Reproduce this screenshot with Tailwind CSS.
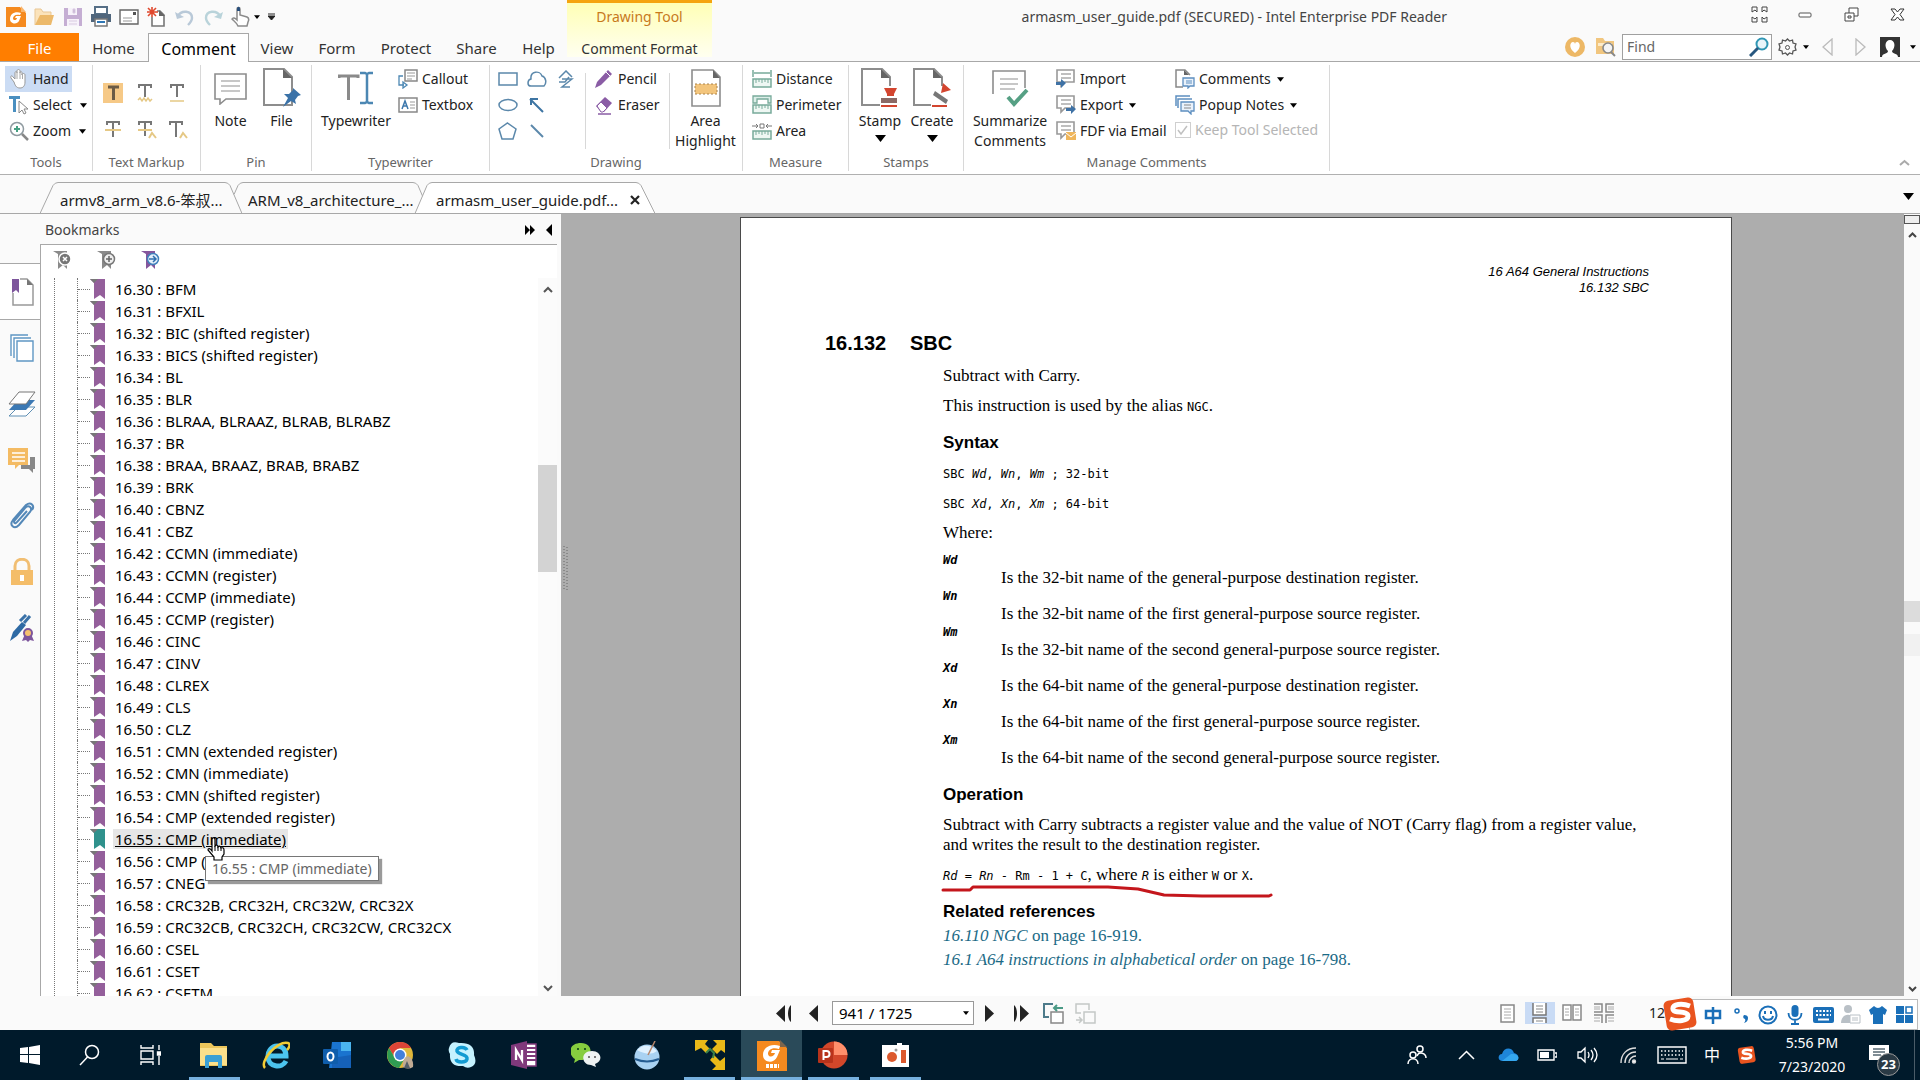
<!DOCTYPE html>
<html lang="en">
<head>
    <meta charset="UTF-8">
    <meta name="viewport" content="width=device-width, initial-scale=1.0">
    <title>armasm_user_guide.pdf (SECURED) - Intel Enterprise PDF Reader</title>
    <script src="https://cdn.jsdelivr.net/npm/@tailwindcss/browser@4"></script>
</head>
<body class="h-screen flex flex-col overflow-hidden bg-[#fafafa] font-['Noto_Sans','Noto_Sans_CJK_SC',sans-serif] text-[14px] leading-5 text-[#222]">
    <svg class="hidden">
        <symbol id="caret" viewBox="0 0 8 5"><path d="M0 0h8L4 5z" fill="currentColor"/></symbol>
        <symbol id="pdf-page" viewBox="0 0 38 40"><path d="M1 1h20l8 8v28H1z" fill="#fff" stroke="#8d8d8d" stroke-width="2"/><path d="M20 1v9h9z" fill="#666"/></symbol>
        <symbol id="bubble" viewBox="0 0 20 20"><path d="M1 1h17v12h-9l-4 4v-4H1z" fill="#fff" stroke="#999" stroke-width="1.6"/><path d="M5 5h10M5 9h10" stroke="#aaa" stroke-width="1.5"/></symbol>
        <symbol id="ruler" viewBox="0 0 20 20"><path d="M1 10h18v8H1z" fill="#eef7f3" stroke="#78ab9b" stroke-width="1.5"/><path d="M4 10v4M7 10v3M10 10v4M13 10v3M16 10v4" stroke="#78ab9b"/></symbol>
    </svg>

    <!-- title bar and menu -->
    <header class="flex h-[62px] border-b border-[#a8a8a8] shrink-0">
        <div class="flex">
            <div class="flex flex-col">
                <div class="flex items-center h-[33px] pl-[6px] gap-2">
                    <button aria-label="Reader"><svg width="20" height="22" viewBox="0 0 20 22"><path d="M0 1h14l6 6v14H0z" fill="#f58a1f"/><path d="M15 0v6h5z" fill="#f9b56c"/><path d="M15 7C9 5 4 8 4 13c0 5 7 6 9 2l2-5h-5l-1 2h2c0 2-3 3-4 1 0-3 2-5 7-4z" fill="#fff"/></svg></button>
                    <button aria-label="Open"><svg width="21" height="20" viewBox="0 0 21 20"><path d="M1 18V2h6l2 3h8v4" fill="#fbe3bb" stroke="#e9c795"/><path d="M1 18L6 8h14l-3 10z" fill="#ecb96a"/></svg></button>
                    <button aria-label="Save"><svg width="20" height="20" viewBox="0 0 20 20"><path d="M1 1h18v18H1z" fill="#c5aed3"/><path d="M5 1h9v7H5zM4 12h12v7H4z" fill="#f7f2fa"/><path d="M10 2h2v4h-2zM6 14h8M6 17h8" fill="#c5aed3" stroke="#d8cbe0"/></svg></button>
                    <button aria-label="Print"><svg width="20" height="21" viewBox="0 0 20 21"><path d="M4 1h12v7H4z" fill="#fff" stroke="#566f86" stroke-width="2"/><path d="M0 8h20v8H0z" fill="#50667c"/><path d="M4 13h12v7H4z" fill="#fff" stroke="#777" stroke-width="1.5"/><path d="M6 16h8" stroke="#2f77b5" stroke-width="2"/></svg></button>
                    <button aria-label="Email"><svg width="20" height="18" viewBox="0 0 20 18"><path d="M1 2h18v14H1z" fill="#fff" stroke="#666" stroke-width="1.4"/><path d="M4 10h9M4 13h9" stroke="#999"/><path d="M14 4h3v3h-3z" fill="#555"/></svg></button>
                    <button aria-label="New"><svg width="20" height="22" viewBox="0 0 20 22"><path d="M5 11v9h12V9l-4-4h-3" fill="#fff" stroke="#777" stroke-width="1.6"/><path d="M12 4v6h6z" fill="#666"/><path d="M5 1v10M0 6h11M1 2l8 8M9 2l-8 8" stroke="#e0492e" stroke-width="1.6"/></svg></button>
                    <button aria-label="Undo"><svg width="20" height="20" viewBox="0 0 20 20"><path d="M3 9c3-6 14-6 14 2 0 3-2 5-4 7" fill="none" stroke="#b9c9d8" stroke-width="2.4"/><path d="M0 5l2 7 7-2z" fill="#b9c9d8"/></svg></button>
                    <button aria-label="Redo"><svg width="20" height="20" viewBox="0 0 20 20"><path d="M17 9C14 3 3 3 3 11c0 3 2 5 4 7" fill="none" stroke="#b9d3da" stroke-width="2.4"/><path d="M20 5l-2 7-7-2z" fill="#b9d3da"/></svg></button>
                    <button aria-label="Touch mode" class="flex items-center gap-1"><svg width="19" height="21" viewBox="0 0 19 21"><path d="M6 12V3c0-2 3-2 3 0v6l7 2c2 1 2 3 1 5l-1 4H7c-1-3-4-5-6-7 1-2 3-1 5 1z" fill="#fff" stroke="#8b8b8b" stroke-width="1.5"/><path d="M6 5V3c0-3 3-3 3 0v2z" fill="#274e7c"/></svg><svg width="6" height="4" class="text-black"><use href="#caret"/></svg></button>
                    <button aria-label="Customize toolbar"><svg width="7" height="8" viewBox="0 0 7 8"><path d="M0 1h7M0 3h7l-3.500 4z" stroke="#222" fill="#222"/></svg></button>
                </div>
                <nav class="flex h-[28px] text-[15px] text-[#333] [&>button]:pt-[2px]">
                    <button class="w-[79px] bg-[#ff7e00] text-white">File</button>
                    <button class="w-[69px]">Home</button>
                    <button class="w-[101px] h-[29px] bg-white border border-b-0 border-[#a8a8a8] text-[16px] text-black">Comment</button>
                    <button class="w-[56px]">View</button>
                    <button class="w-[64px]">Form</button>
                    <button class="w-[74px]">Protect</button>
                    <button class="w-[67px]">Share</button>
                    <button class="w-[57px]">Help</button>
                </nav>
            </div>
            <div class="w-[145px] h-[57px] border-t-3 border-[#f5a40f] bg-linear-to-b from-[#ffffb5] to-[#fffff0] flex flex-col items-center text-[#c8791c]">
                <span class="h-[29px] leading-7 shrink-0">Drawing Tool</span>
                <button class="h-[32px] shrink-0 pt-px text-[#333]">Comment Format</button>
            </div>
        </div>
        <div class="text-[#444] pt-[7px] ml-auto mr-[112px] whitespace-nowrap">armasm_user_guide.pdf (SECURED) - Intel Enterprise PDF Reader</div>
        <div class="flex flex-col items-end">
            <div class="flex h-[33px] pb-1">
                <button aria-label="Full screen" class="w-[46px] grid place-items-center"><svg width="17" height="17" viewBox="0 0 17 17" fill="none" stroke="#444"><path d="M1 1h5v5l-2-2-3 2zM11 1h5v5l-3-2-2 2zM1 11l3 2 2-2v5H1zM11 11l2 2 3-2v5h-5z"/></svg></button>
                <button aria-label="Minimize" class="w-[46px] grid place-items-center"><svg width="14" height="6" viewBox="0 0 14 6"><rect x="1" y="1" width="12" height="4" rx="1" fill="#fff" stroke="#555"/></svg></button>
                <button aria-label="Restore" class="w-[46px] grid place-items-center"><svg width="15" height="15" viewBox="0 0 15 15" fill="#fff" stroke="#444"><path d="M5 1h9v8H5z"/><path d="M1 6h9v8H1z"/><path d="M4 9h3v2H4z"/></svg></button>
                <button aria-label="Close" class="w-[46px] grid place-items-center"><svg width="15" height="13" viewBox="0 0 15 13"><path d="M1 1h4l2.500 3L10 1h4l-4 5.500L14 12h-4L7.500 9 5 12H1l4-5.500z" fill="#fff" stroke="#333"/></svg></button>
            </div>
            <div class="flex items-center h-[28px] pr-1">
                <button aria-label="Favorites" class="w-[31px] grid place-items-center"><svg width="20" height="20" viewBox="0 0 20 20"><circle cx="10" cy="10" r="10" fill="#edb866"/><path d="M10 16C3 11 5 5 8 5q2 0 2 2 0-2 2-2c3 0 5 6-2 11z" fill="#fff"/></svg></button>
                <button aria-label="Search folder" class="w-[32px] grid place-items-center"><svg width="20" height="20" viewBox="0 0 20 20"><path d="M0 1h7l2 3h9v13H0z" fill="#f1c67f"/><path d="M2 6h14v3H2z" fill="#fdebc8"/><circle cx="12" cy="11" r="5" fill="#f4f4f4" stroke="#888" stroke-width="1.600"/><path d="M15 15l4 4" stroke="#888" stroke-width="2"/></svg></button>
                <label class="flex items-center w-[150px] h-[26px] border border-[#a0a0a0] bg-white pl-1 pr-[2px]">
                    <input type="text" aria-label="Find" placeholder="Find" class="w-full outline-none placeholder:text-[#666]">
                    <svg class="shrink-0" width="20" height="20" viewBox="0 0 20 20"><circle cx="13" cy="7" r="5.500" fill="#e8f5fa" stroke="#2f96b4" stroke-width="2"/><path d="M9 11l-8 8" stroke="#27577f" stroke-width="3"/></svg>
                </label>
                <button aria-label="Settings" class="flex items-center w-[42px] pl-[6px] gap-[6px]"><svg width="19" height="19" viewBox="0 0 19 19" fill="none" stroke="#555"><path d="M9.500 1l2 2 3-1 .5 3 3 1-1 3 1 3-3 1-.5 3-3-1-2 2-2-2-3 1-.5-3-3-1 1-3-1-3 3-1L4.500 2l3 1z" stroke-width="1.300"/><circle cx="9.500" cy="9.500" r="2"/></svg><svg width="6" height="4" class="text-black shrink-0"><use href="#caret"/></svg></button>
                <button aria-label="Previous result" class="w-[26px] grid place-items-center"><svg width="11" height="18" viewBox="0 0 11 18"><path d="M10 1v16L1 9z" fill="none" stroke="#bbb" stroke-width="1.300"/></svg></button>
                <button aria-label="Next result" class="w-[40px] grid place-items-center"><svg width="11" height="18" viewBox="0 0 11 18"><path d="M1 1v16l9-8z" fill="none" stroke="#bbb" stroke-width="1.300"/></svg></button>
                <button aria-label="Account" class="flex items-center gap-[10px]"><svg width="20" height="20" viewBox="0 0 20 20"><path d="M0 0h20v20H0z" fill="#333"/><path d="M2 20c0-4 6-3 6-6-4-4-3-11 2-11s6 7 2 11c0 3 6 2 6 6z" fill="#fff"/></svg><svg width="6" height="4" class="text-black"><use href="#caret"/></svg></button>
            </div>
        </div>
    </header>

    <!-- ribbon -->
    <section class="relative flex h-[113px] shrink-0 bg-white border-b border-[#b0b0b0] py-[3px]">
        <div class="w-[93px] border-r border-[#d8d8d8] flex flex-col">
            <div class="h-[90px] pt-px pl-[5px]">
                <button class="flex items-center gap-1 h-[26px] w-[67px] bg-[#cbdcf4] pl-1"><svg width="20" height="20" viewBox="0 0 20 20"><path d="M5 13L2 9c-1-2 1-3 2-1l2 2V4c0-2 2-2 2 0V2c0-2 3-2 3 0v2c0-2 2-2 2 0v2c0-2 3-2 3 0v7c0 4-2 6-5 6-4 0-5-3-6-6z" fill="#fff" stroke="#999"/><path d="M8 4v6M11 4v6M13.500 5v5" stroke="#aaa"/></svg>Hand</button>
                <button class="flex items-center gap-1 h-[26px] pl-1"><svg width="20" height="20" viewBox="0 0 20 20"><path d="M0 1h11v3H7v13H4V4H0z" fill="#4a8fc0"/><path d="M10 6v12l3-3 2 4 2-1-2-4h4z" fill="#fff" stroke="#888"/></svg>Select<svg class="ml-1 text-black" width="7" height="5"><use href="#caret"/></svg></button>
                <button class="flex items-center gap-1 h-[26px] pl-1"><svg width="20" height="20" viewBox="0 0 20 20"><circle cx="8" cy="8" r="6.500" fill="#fff" stroke="#8f9aa0" stroke-width="1.500"/><path d="M8 5v6M5 8h6" stroke="#47a083" stroke-width="2"/><path d="M13 13l6 6" stroke="#888" stroke-width="2.500"/></svg>Zoom<svg class="ml-1 text-black" width="7" height="5"><use href="#caret"/></svg></button>
            </div>
            <div class="text-center text-[13px] leading-[14px] text-[#666]">Tools</div>
        </div>
        <div class="w-[108px] border-r border-[#d8d8d8] flex flex-col">
            <div class="h-[90px] pt-[10px] pl-[2px] grid grid-cols-[36px_30px_34px] grid-rows-[36px_36px] place-items-center">
                <button aria-label="Highlight"><svg width="22" height="22" viewBox="0 0 22 22"><path d="M1 1h20v20H1z" fill="#f6c987"/><path d="M6 5h11M11.500 5v13" stroke="#6b5b45" stroke-width="3" fill="none"/></svg></button>
                <button aria-label="Squiggly"><svg width="22" height="22" viewBox="0 0 22 22"><path d="M4 3h12M4 2v4M16 2v4M10 3v12" stroke="#777" stroke-width="2" fill="none"/><path d="M3 18l2-2 2 3 2-3 2 3 2-3 2 3 2-2" stroke="#e5c885" fill="none" stroke-width="1.500"/></svg></button>
                <button aria-label="Underline"><svg width="22" height="22" viewBox="0 0 22 22"><path d="M4 3h12M4 2v4M16 2v4M10 3v12" stroke="#777" stroke-width="2" fill="none"/><path d="M3 19h14" stroke="#e5c885" stroke-width="1.500"/></svg></button>
                <button aria-label="Strikeout"><svg width="22" height="22" viewBox="0 0 22 22"><path d="M5 4h12M5 3v4M17 3v4M11 4v15" stroke="#777" stroke-width="2" fill="none"/><path d="M3 12h16" stroke="#e5c885" stroke-width="2"/></svg></button>
                <button aria-label="Replace"><svg width="22" height="22" viewBox="0 0 22 22"><path d="M4 4h12M4 3v4M16 3v4M10 4v14" stroke="#777" stroke-width="2" fill="none"/><path d="M3 12h14M14 20l3-5 4 5" stroke="#e5c885" stroke-width="2" fill="none"/></svg></button>
                <button aria-label="Insert"><svg width="22" height="22" viewBox="0 0 22 22"><path d="M3 4h12M3 3v4M15 3v4M9 4v15" stroke="#777" stroke-width="2" fill="none"/><path d="M13 20l3-5 4 5" stroke="#e5c885" stroke-width="2" fill="none"/></svg></button>
            </div>
            <div class="text-center text-[13px] leading-[14px] text-[#666]">Text Markup</div>
        </div>
        <div class="w-[111px] border-r border-[#d8d8d8] flex flex-col">
            <div class="h-[90px] flex justify-center">
                <button class="w-[51px] flex flex-col items-center"><span class="h-[46px] grid place-items-center"><svg width="33" height="34" viewBox="0 0 33 34"><path d="M1 3h31v25H12l-6 5v-5H1z" fill="#fff" stroke="#8d8d8d" stroke-width="1.600"/><path d="M7 10h19M7 15h19M7 20h19" stroke="#b5b5b5" stroke-width="1.600"/></svg></span>Note</button>
                <button class="w-[51px] flex flex-col items-center"><span class="h-[46px] grid place-items-center"><svg width="38" height="40" viewBox="0 0 38 40"><use href="#pdf-page" width="38" height="40"/><path d="M30 20l8 7-3 1-3 4 1 4-5-3-8 6 5-9-4-4 5 0 4-4z" fill="#3a72a8"/></svg></span>File</button>
            </div>
            <div class="text-center text-[13px] leading-[14px] text-[#666]">Pin</div>
        </div>
        <div class="w-[178px] border-r border-[#d8d8d8] flex flex-col">
            <div class="h-[90px] flex pl-[7px]">
                <button class="w-[74px] flex flex-col items-center"><span class="h-[46px] grid place-items-center"><svg width="36" height="34" viewBox="0 0 36 34"><path d="M1 7V5h19v2M10.500 5v24" stroke="#8a8a8a" stroke-width="3" fill="none"/><path d="M22 2h5l2 1 2-1h4M29 3v28M22 32h5l2-1 2 1h4" stroke="#4c87b3" stroke-width="2.500" fill="none"/></svg></span>Typewriter</button>
                <div class="pl-[5px] pt-px">
                    <button class="flex items-center gap-1 h-[26px]"><svg width="20" height="20" viewBox="0 0 20 20"><path d="M7 1h12v11H7z" fill="#fff" stroke="#888" stroke-width="1.500"/><path d="M9 4h8M9 7h8M9 10h5" stroke="#999"/><path d="M5 7H1v9h5M5 13l4 3-4 3z" fill="none" stroke="#4c87b3" stroke-width="1.300"/></svg>Callout</button>
                    <button class="flex items-center gap-1 h-[26px]"><svg width="20" height="18" viewBox="0 0 20 18"><path d="M1 2h18v14H1z" fill="#fff" stroke="#888" stroke-width="1.500"/><path d="M4 13L7 5l3 8M5 10h4" stroke="#3b77ac" stroke-width="1.500" fill="none"/><path d="M12 6h5M12 9h5M12 12h5" stroke="#999"/></svg>Textbox</button>
                </div>
            </div>
            <div class="text-center text-[13px] leading-[14px] text-[#666]">Typewriter</div>
        </div>
        <div class="w-[253px] border-r border-[#d8d8d8] flex flex-col">
            <div class="h-[90px] flex">
                <div class="w-[95px] h-[78px] mt-px pl-[3px] pr-1 grid grid-cols-3 grid-rows-3 place-items-center">
                    <button aria-label="Rectangle"><svg width="20" height="16" viewBox="0 0 20 16" fill="none" stroke="#5b88ab" stroke-width="1.500"><path d="M1 2h18v12H1z"/></svg></button>
                    <button aria-label="Cloud"><svg width="20" height="16" viewBox="0 0 20 16" fill="none" stroke="#5b88ab" stroke-width="1.500"><path d="M4 15c-4 0-4-6 0-7-1-8 9-9 11-3 4 1 5 7 2 10z"/></svg></button>
                    <button aria-label="Polyline"><svg width="16" height="18" viewBox="0 0 16 18" fill="none" stroke="#5b88ab" stroke-width="1.500"><path d="M1 8l7-7 6 6M4 9h10L4 17h8M1 12h6l4-5"/></svg></button>
                    <button aria-label="Oval"><svg width="20" height="14" viewBox="0 0 20 14" fill="none" stroke="#5b88ab" stroke-width="1.500"><ellipse cx="10" cy="7" rx="9" ry="5.500"/></svg></button>
                    <button aria-label="Arrow"><svg width="18" height="16" viewBox="0 0 18 16" fill="none" stroke="#3e75a3" stroke-width="2"><path d="M2 2l13 13M3 8V2h7"/></svg></button>
                    <span></span>
                    <button aria-label="Polygon"><svg width="19" height="18" viewBox="0 0 19 18" fill="none" stroke="#5b88ab" stroke-width="1.500"><path d="M9.500 1L18 7l-3 10H4L1 7z"/></svg></button>
                    <button aria-label="Line"><svg width="18" height="16" viewBox="0 0 18 16" fill="none" stroke="#5b88ab" stroke-width="2"><path d="M3 2l12 12"/></svg></button>
                </div>
                <div class="w-[85px] h-[76px] mt-2 -mr-px border-x border-[#d8d8d8] pl-2">
                    <button class="-mt-[7px] flex items-center gap-1 h-[26px]"><svg width="20" height="20" viewBox="0 0 20 20"><path d="M1 19l2-6L14 1l4 4L7 16z" fill="#8a5ca5"/><path d="M12 3l4 4" stroke="#fff"/></svg>Pencil</button>
                    <button class="flex items-center gap-1 h-[26px]"><svg width="20" height="20" viewBox="0 0 20 20"><path d="M2 11l9-9 7 6-8 9H7z" fill="#8a5ca5"/><path d="M3 11l4-4 6 6-4 4H7z" fill="#fff" stroke="#8a5ca5"/><path d="M4 19h13" stroke="#8a5ca5" stroke-width="1.500"/></svg>Eraser</button>
                </div>
                <button class="flex-1 flex flex-col items-center"><span class="h-[46px] shrink-0 grid place-items-center"><svg width="30" height="38" viewBox="0 0 30 38"><path d="M1 1h21l7 7v29H1z" fill="#fff" stroke="#8d8d8d" stroke-width="1.600"/><path d="M22 1v8h7z" fill="#666"/><path d="M4 15h22v10H4z" fill="#f3c57c" stroke="#a8824c" stroke-dasharray="2 2"/></svg></span>Area<br>Highlight</button>
            </div>
            <div class="text-center text-[13px] leading-[14px] text-[#666]">Drawing</div>
        </div>
        <div class="w-[106px] border-r border-[#d8d8d8] flex flex-col">
            <div class="h-[90px] pl-[9px] pt-px">
                <button class="flex items-center gap-1 h-[26px]"><svg width="20" height="20" viewBox="0 0 20 20"><use href="#ruler" width="20" height="20"/><path d="M1 1v7M19 1v7M2 4h16" stroke="#78ab9b" stroke-width="1.500"/></svg>Distance</button>
                <button class="flex items-center gap-1 h-[26px]"><svg width="20" height="20" viewBox="0 0 20 20"><use href="#ruler" width="20" height="20"/><path d="M1 1h18v7h-3V4H5v4H1z" fill="#dceee8" stroke="#78ab9b" stroke-width="1.300"/></svg>Perimeter</button>
                <button class="flex items-center gap-1 h-[26px]"><svg width="20" height="20" viewBox="0 0 20 20"><use href="#ruler" width="20" height="20"/><path d="M0 5h6M14 5h6M8 3h4v4H8zM4 3l2 2-2 2M16 3l-2 2 2 2" fill="none" stroke="#777"/></svg>Area</button>
            </div>
            <div class="text-center text-[13px] leading-[14px] text-[#666]">Measure</div>
        </div>
        <div class="w-[115px] border-r border-[#d8d8d8] flex flex-col">
            <div class="h-[90px] flex pl-[5px]">
                <button class="w-[52px] flex flex-col items-center"><span class="h-[46px] shrink-0 grid place-items-center"><svg width="38" height="40" viewBox="0 0 38 40"><use href="#pdf-page" width="38" height="40"/><path d="M19 18h19v22H19z" fill="#fff"/><path d="M23 20h13l-3 6v2h-7v-2zM20 37h16v2H20z" fill="#d3452f"/><path d="M20 30h16v5H20z" fill="#8a6a66"/></svg></span>Stamp<svg class="mt-1 text-black" width="11" height="7"><use href="#caret"/></svg></button>
                <button class="w-[52px] flex flex-col items-center"><span class="h-[46px] shrink-0 grid place-items-center"><svg width="38" height="40" viewBox="0 0 38 40"><use href="#pdf-page" width="38" height="40"/><path d="M18 18h20v22H18z" fill="#fff"/><path d="M30 15l8 7-10 3zM19 37h15v2H19z" fill="#d3452f"/><path d="M22 23l13 9-2 4-13-9z" fill="#777"/></svg></span>Create<svg class="mt-1 text-black" width="11" height="7"><use href="#caret"/></svg></button>
            </div>
            <div class="text-center text-[13px] leading-[14px] text-[#666]">Stamps</div>
        </div>
        <div class="w-[366px] border-r border-[#d8d8d8] flex flex-col">
            <div class="h-[90px] flex pl-2">
                <button class="w-[76px] flex flex-col items-center"><span class="h-[46px] shrink-0 grid place-items-center"><svg width="37" height="38" viewBox="0 0 37 38"><path d="M1 25V2h32v17" fill="none" stroke="#8d8d8d" stroke-width="1.600"/><path d="M8 10h18M8 15h18M8 20h15" stroke="#b5b5b5" stroke-width="1.600"/><path d="M16 28l6 7 13-14" fill="none" stroke="#56a084" stroke-width="4"/></svg></span>Summarize<br>Comments</button>
                <div class="w-[119px] pl-2 pt-px whitespace-nowrap">
                    <button class="flex items-center gap-1 h-[26px]"><svg width="20" height="20" viewBox="0 0 20 20"><use href="#bubble" width="20" height="20"/><path d="M0 13h5v-3l5 4-5 5v-3H0z" fill="#3f72a5"/></svg>Import</button>
                    <button class="flex items-center gap-1 h-[26px]"><svg width="20" height="20" viewBox="0 0 20 20"><use href="#bubble" width="20" height="20"/><path d="M10 13h5v-3l5 4-5 5v-3h-5z" fill="#3f72a5"/></svg>Export<svg class="ml-[2px] text-black" width="7" height="5"><use href="#caret"/></svg></button>
                    <button class="flex items-center gap-1 h-[26px]"><svg width="20" height="20" viewBox="0 0 20 20"><use href="#bubble" width="20" height="20"/><path d="M10 11h10v8H10z" fill="#efb65c"/><path d="M10 12l5 4 5-4" fill="none" stroke="#fff"/></svg>FDF via Email</button>
                </div>
                <div class="pl-2 pt-px">
                    <button class="flex items-center gap-1 h-[26px]"><svg width="20" height="20" viewBox="0 0 20 20"><path d="M8 18H1V1h9l5 5" fill="none" stroke="#888" stroke-width="1.500"/><path d="M9 1v5h5z" fill="#666"/><path d="M8 9h11v8h-4l-2 2v-2H8z" fill="#eaf2fb" stroke="#5d8fc0" stroke-width="1.300"/><path d="M11 12h6M11 14h6" stroke="#5d8fc0"/></svg>Comments<svg class="ml-[2px] text-black" width="7" height="5"><use href="#caret"/></svg></button>
                    <button class="flex items-center gap-1 h-[26px]"><svg width="20" height="20" viewBox="0 0 20 20"><path d="M1 11V1h14M3 13V4h14" fill="none" stroke="#5d8fc0" stroke-width="1.500"/><path d="M6 7h13v9h-3v3l-3-3H6z" fill="#eaf2fb" stroke="#5d8fc0" stroke-width="1.300"/><path d="M9 10h7M9 13h7" stroke="#888"/></svg>Popup Notes<svg class="ml-[2px] text-black" width="7" height="5"><use href="#caret"/></svg></button>
                    <label class="flex items-center gap-1 h-[24px] text-[#b5b5b5]"><span class="relative grid size-4"><input type="checkbox" checked disabled class="appearance-none size-4 border border-[#cfcfcf] bg-white"><svg class="absolute inset-0" width="16" height="16" viewBox="0 0 16 16"><path d="M3 8l3 4 6-8" fill="none" stroke="#c0c0c0" stroke-width="1.500"/></svg></span>Keep Tool Selected</label>
                </div>
            </div>
            <div class="text-center text-[13px] leading-[14px] text-[#666]">Manage Comments</div>
        </div>
        <button aria-label="Collapse ribbon" class="absolute right-[10px] bottom-2"><svg width="11" height="7" viewBox="0 0 11 7"><path d="M1 6l4.500-4L10 6" fill="none" stroke="#aaa" stroke-width="2"/></svg></button>
    </section>

    <!-- document tabs -->
    <div class="flex items-end h-[39px] shrink-0 pl-10 border-b border-[#a8a8a8] text-[15px]">
        <button class="relative w-[202px] h-[31px] pl-5 pt-1 text-left whitespace-nowrap"><svg class="absolute inset-0" width="202" height="31" viewBox="0 0 202 31"><path d="M0 31L13 3q2-3 5-3h167q3 0 5 3l12 28" transform="translate(0 .5)" fill="#fafafa" stroke="#a8a8a8"/></svg><span class="relative">armv8_arm_v8.6-笨叔...</span></button>
        <button class="relative w-[204px] h-[31px] -ml-4 pl-[22px] pt-1 text-left whitespace-nowrap"><svg class="absolute inset-0" width="204" height="31" viewBox="0 0 204 31"><path d="M8 12l4-9q2-3 5-3h170q3 0 5 3l12 28" transform="translate(0 .5)" fill="#fafafa" stroke="#a8a8a8"/></svg><span class="relative">ARM_v8_architecture_...</span></button>
        <button class="relative w-[242px] h-[31px] -ml-4 pl-[22px] pt-1 text-left whitespace-nowrap"><svg class="absolute inset-0" width="242" height="31" viewBox="0 0 242 31"><path d="M1 31L13 3q2-3 5-3h204q3 0 5 3l14 28" transform="translate(0 .5)" fill="#fff" stroke="#a8a8a8"/></svg><span class="relative">armasm_user_guide.pdf...</span><svg class="absolute right-4 top-[13px]" width="10" height="10" viewBox="0 0 10 10"><path d="M1 1l8 8M9 1L1 9" stroke="#222" stroke-width="2.200"/></svg></button>
        <button aria-label="Tab list" class="ml-auto mr-[6px] mb-[13px]"><svg class="text-black" width="11" height="7"><use href="#caret"/></svg></button>
    </div>

    <main class="flex flex-1 min-h-0">
        <!-- side rail -->
        <nav class="w-[41px] shrink-0 flex flex-col items-center">
            <div class="self-stretch h-[49px]"></div>
            <button aria-label="Bookmarks" class="self-stretch h-[57px] pl-1 border-y border-[#a8a8a8] bg-white grid place-items-center"><svg width="24" height="28" viewBox="0 0 24 28"><path d="M9 1h7l6 6v20H2V15" fill="none" stroke="#999" stroke-width="1.500"/><path d="M16 1v6h6z" fill="#777"/><path d="M1 1h7v14l-3-3-4 3z" fill="#7d559c"/></svg></button>
            <div class="self-stretch flex-1 flex flex-col items-center pl-1 border-r border-[#a8a8a8]">
                <button aria-label="Pages" class="h-14 grid place-items-center"><svg width="24" height="28" viewBox="0 0 24 28" fill="#fff" stroke="#5f97c4" stroke-width="1.400"><path d="M1 22V1h17M4 24V4h17"/><path d="M7 7h16v20H7z"/></svg></button>
                <button aria-label="Layers" class="h-14 grid place-items-center"><svg width="28" height="26" viewBox="0 0 28 26"><path d="M1 25l9-9h17l-9 9z" fill="#fff" stroke="#5f8fb4"/><path d="M1 19l9-10h17l-9 10z" fill="#3c79b4"/><path d="M1 13L11 1h16l-9 12z" fill="#fff" stroke="#777"/></svg></button>
                <button aria-label="Comments" class="h-14 grid place-items-center"><svg width="28" height="26" viewBox="0 0 28 26"><path d="M22 10h5v12h-2v4l-4-4h-8v-4h9z" fill="#888"/><path d="M0 1h20v17h-9l-4 4v-4H0z" fill="#f4bb63"/><path d="M4 6h13M4 10h13M4 14h13" stroke="#fff" stroke-width="1.500"/></svg></button>
                <button aria-label="Attachments" class="h-14 grid place-items-center"><svg width="26" height="28" viewBox="0 0 26 28"><path d="M18 9L8 20c-2 3-4 0-2-2L16 6c4-4 8 0 5 4L10 23c-5 5-10 0-6-5L17 3c5-4 9 1 6 5" fill="none" stroke="#5488b8" stroke-width="2"/></svg></button>
                <button aria-label="Security" class="h-14 grid place-items-center"><svg width="24" height="28" viewBox="0 0 24 28"><path d="M5 13V8c0-9 14-9 14 0v5" fill="none" stroke="#f1be72" stroke-width="3"/><path d="M1 12h22v15H1z" fill="#f4bd69"/><path d="M10 17h4v6h-4z" fill="#fff"/></svg></button>
                <button aria-label="Signatures" class="h-14 grid place-items-center"><svg width="26" height="28" viewBox="0 0 26 28"><path d="M1 27l3-9 9-10 4 3-9 11z" fill="#2e6aa4"/><path d="M15 9l6-7M11 7l6-6" stroke="#3a72a8" stroke-width="3"/><path d="M16 20l-3 7 4-1 2 2 2-2 4 1-3-7z" fill="#7d559c"/><circle cx="19" cy="19" r="4" fill="#f5c16e" stroke="#7d559c" stroke-width="2"/></svg></button>
            </div>
        </nav>

        <!-- bookmarks panel -->
        <aside class="w-[520px] shrink-0 flex flex-col pr-1">
            <div class="flex items-center justify-between h-[30px] pl-1 pr-[5px] pt-px text-[#444] shrink-0">
                <h2>Bookmarks</h2>
                <div class="flex items-center gap-[11px]">
                    <button aria-label="Expand"><svg width="10" height="10" viewBox="0 0 10 10"><path d="M0 0l5 5-5 5zM5 0l5 5-5 5z"/></svg></button>
                    <button aria-label="Collapse"><svg width="6" height="12" viewBox="0 0 6 12"><path d="M6 0v12L0 6z"/></svg></button>
                </div>
            </div>
            <div class="flex-1 min-h-0 flex flex-col bg-white border-t border-[#a8a8a8] border-l -ml-px">
                <div class="flex items-start gap-[25px] h-[33px] pt-[5px] pl-3 shrink-0">
                    <button aria-label="Delete bookmark"><svg width="19" height="20" viewBox="0 0 19 20"><path d="M0 1h14v18l-4-4-5 4V4z" fill="#8a8a8a"/><circle cx="12" cy="9" r="6" fill="#777" stroke="#fff" stroke-width="1.500"/><path d="M10 7l4 4M14 7l-4 4" stroke="#fff" stroke-width="1.500"/></svg></button>
                    <button aria-label="Add bookmark"><svg width="19" height="20" viewBox="0 0 19 20"><path d="M0 1h14v18l-4-4-5 4V4z" fill="#8a8a8a"/><circle cx="12" cy="9" r="5.500" fill="#eee" stroke="#777" stroke-width="1.500"/><path d="M12 6v6M9 9h6" stroke="#666" stroke-width="1.500"/></svg></button>
                    <button aria-label="Go to bookmark"><svg width="19" height="20" viewBox="0 0 19 20"><path d="M0 1h14v18l-4-4-5 4V4z" fill="#84569c"/><circle cx="12" cy="9" r="5.500" fill="#e4effa" stroke="#3f80bb" stroke-width="1.500"/><path d="M8 9h7M12 6l3 3-3 3" fill="none" stroke="#2f6fae" stroke-width="1.500"/></svg></button>
                </div>
                <div class="flex flex-1 min-h-0">
                    <ul id="bookmarks" class="flex-1 ml-[13px] border-l border-dotted border-[#777] overflow-hidden text-[15px] text-black"></ul>
                    <div class="w-[19px] bg-[#fbfbfb] flex flex-col items-center">
                        <svg class="mt-2 shrink-0" width="10" height="7" viewBox="0 0 10 7"><path d="M1 6l4-4 4 4" fill="none" stroke="#555" stroke-width="2"/></svg>
                        <div class="mt-[172px] w-full h-[107px] bg-[#d3d3d3]"></div>
                        <svg class="mt-auto mb-1" width="10" height="7" viewBox="0 0 10 7"><path d="M1 1l4 4 4-4" fill="none" stroke="#555" stroke-width="2"/></svg>
                    </div>
                </div>
            </div>
        </aside>

        <!-- document -->
        <div class="relative flex-1 bg-[#adadad] pt-[3px] overflow-hidden">
            <svg class="absolute left-[2px] top-[332px]" width="5" height="45" viewBox="0 0 5 45"><path d="M1 0v45M4 1v44" stroke="#666" stroke-dasharray="1 2"/></svg>
            <article class="ml-[179px] mr-auto w-[992px] relative h-full bg-white border border-b-0 border-[#4a4a4a] pt-[46px] pl-[202px] font-['Liberation_Serif',serif] text-[17px] text-black">
                <svg class="absolute left-[199px] top-[664px]" width="334" height="16" viewBox="0 0 334 16"><path d="M3 8h27l3-3h135l30 2 13 3 13 3 38 1h67l2-1" fill="none" stroke="#c4161c" stroke-width="3" stroke-linejoin="round" stroke-linecap="round"/></svg>
                <p class="pr-[82px] text-right font-['Liberation_Sans',sans-serif] italic text-[13px] leading-4">16 A64 General Instructions<br>16.132 SBC</p>
                <h1 class="mt-[35px] -ml-[118px] flex font-['Liberation_Sans',sans-serif] font-bold text-[20px] leading-6"><span class="w-[85px]">16.132</span>SBC</h1>
                <p class="mt-[11px]">Subtract with Carry.</p>
                <p class="mt-[10px]">This instruction is used by the alias <code class="font-['DejaVu_Sans_Mono',monospace] text-[12px]">NGC</code>.</p>
                <h2 class="mt-4 font-['Liberation_Sans',sans-serif] font-bold">Syntax</h2>
                <pre class="mt-[11px] font-['DejaVu_Sans_Mono',monospace] text-[12px]">SBC <i>Wd</i>, <i>Wn</i>, <i>Wm</i> ; 32-bit</pre>
                <pre class="mt-[10px] font-['DejaVu_Sans_Mono',monospace] text-[12px]">SBC <i>Xd</i>, <i>Xn</i>, <i>Xm</i> ; 64-bit</pre>
                <p class="mt-[9px]">Where:</p>
                <dl id="operands" class="mt-[9px]"></dl>
                <h2 class="mt-[17px] font-['Liberation_Sans',sans-serif] font-bold">Operation</h2>
                <p class="mt-[10px] w-[710px]">Subtract with Carry subtracts a register value and the value of NOT (Carry flag) from a register value, and writes the result to the destination register.</p>
                <p class="mt-[10px]"><code class="font-['DejaVu_Sans_Mono',monospace] text-[12px]"><i>Rd</i> = <i>Rn</i> - Rm - 1 + C</code>, where <code class="font-['DejaVu_Sans_Mono',monospace] text-[12px] italic">R</code> is either <code class="font-['DejaVu_Sans_Mono',monospace] text-[12px]">W</code> or <code class="font-['DejaVu_Sans_Mono',monospace] text-[12px]">X</code>.</p>
                <h2 class="mt-4 font-['Liberation_Sans',sans-serif] font-bold">Related references</h2>
                <p class="mt-1"><a href="#" class="text-[#1b6a86]"><i>16.110 NGC</i> on page 16-919.</a></p>
                <p class="mt-1"><a href="#" class="text-[#1b6a86]"><i>16.1 A64 instructions in alphabetical order</i> on page 16-798.</a></p>
            </article>
        </div>
        <div class="w-4 shrink-0 bg-[#fafafa] flex flex-col items-center">
            <div class="w-full h-[9px] mt-px border border-[#555] bg-[#eee] shrink-0"></div>
            <svg class="mt-2 shrink-0" width="9" height="6" viewBox="0 0 9 6"><path d="M1 5l3.500-3.500L8 5" fill="none" stroke="#444" stroke-width="2"/></svg>
            <div class="mt-[363px] w-full h-[21px] bg-[#dcdcdc]"></div>
            <div class="mt-3 w-full h-[22px] bg-[#f1f1f1]"></div>
            <svg class="mt-auto mb-1" width="9" height="6" viewBox="0 0 9 6"><path d="M1 1l3.500 3.500L8 1" fill="none" stroke="#444" stroke-width="2"/></svg>
        </div>
    </main>

    <!-- status bar -->
    <footer class="relative flex items-center h-[34px] shrink-0 pl-[776px] bg-[#fafafa]">
        <button aria-label="First page" class="w-[30px]"><svg width="16" height="17" viewBox="0 0 16 17"><path d="M9 0v17L0 8.500zM15 0v17c-4-3-4-14 0-17z" fill="#222"/></svg></button>
        <button aria-label="Previous page" class="w-[26px]"><svg class="ml-[3px]" width="9" height="17" viewBox="0 0 9 17"><path d="M9 0v17L0 8.500z" fill="#222"/></svg></button>
        <div class="relative w-[142px] h-6">
            <select aria-label="Page" class="appearance-none w-full h-6 border border-[#999] bg-white pl-[6px] text-[15px] text-black leading-5"><option>941 / 1725</option></select>
            <svg class="absolute right-[5px] top-[10px] text-black" width="6" height="4"><use href="#caret"/></svg>
        </div>
        <button aria-label="Next page" class="ml-[11px] w-[28px]"><svg width="9" height="17" viewBox="0 0 9 17"><path d="M0 0v17l9-8.500z" fill="#222"/></svg></button>
        <button aria-label="Last page" class="w-[30px]"><svg width="16" height="17" viewBox="0 0 16 17"><path d="M7 0v17l9-8.500zM1 0v17c4-3 4-14 0-17z" fill="#222"/></svg></button>
        <button aria-label="Previous view" class="w-8"><svg width="21" height="21" viewBox="0 0 21 21" fill="none"><path d="M6 14H1V1h9" stroke="#4d7b8a" stroke-width="2"/><path d="M8 9h12v11H8z" fill="#fff" stroke="#888" stroke-width="1.500"/><path d="M20 5h-9M14 2l-3 3 3 3" stroke="#4b9a86" stroke-width="2"/></svg></button>
        <button aria-label="Next view"><svg width="21" height="21" viewBox="0 0 21 21" fill="none" stroke="#c4c8c6" stroke-width="1.500"><path d="M6 10H1V1h13v6"/><path d="M9 9h11v11H9zM1 17h6M4 14l3 3-3 3"/></svg></button>
        <div class="ml-auto mr-[255px] flex items-center gap-[2px]">
            <button aria-label="Single page" class="w-[30px] h-[22px] grid place-items-center"><svg width="15" height="19" viewBox="0 0 15 19"><path d="M1 1h13v17H1z" fill="#fff" stroke="#888" stroke-width="1.500"/><path d="M4 5h7M4 8h7M4 11h7M4 14h7" stroke="#aaa"/></svg></button>
            <button aria-label="Continuous" class="w-[30px] h-[22px] grid place-items-center bg-[#c9dbf5]"><svg width="16" height="20" viewBox="0 0 16 20"><path d="M1 0v12h13V0M1 20v-5h13v5" fill="#fff" stroke="#777" stroke-width="1.500"/><path d="M4 3h7M4 6h7M4 9h7M4 18h7" stroke="#888"/></svg></button>
            <button aria-label="Facing" class="w-[30px] h-[22px] grid place-items-center"><svg width="20" height="18" viewBox="0 0 20 18"><path d="M1 1h8v15H1zM11 1h8v15h-8z" fill="#fff" stroke="#888" stroke-width="1.500"/><path d="M3 5h4M3 8h4M3 11h4M13 5h4M13 8h4M13 11h4" stroke="#aaa"/></svg></button>
            <button aria-label="Continuous facing" class="w-[30px] h-[22px] grid place-items-center"><svg width="20" height="20" viewBox="0 0 20 20"><path d="M0 1h8v8H0M20 1h-8v8h8M0 12h8v8M20 12h-8v8" fill="none" stroke="#888" stroke-width="1.500"/><path d="M0 4h6M0 6h6M14 4h6M14 6h6M0 15h6M0 18h6M14 15h6M14 18h6" stroke="#aaa"/></svg></button>
            <span class="ml-[28px]">12</span>
        </div>
        <!-- input method toolbar -->
        <div class="absolute right-[2px] bottom-0 h-[31px] w-[229px] bg-white border border-[#bbb] flex items-center pl-[9px] gap-[2px] text-[#1a6fb8]">
            <svg class="absolute -left-[28px] -top-1" width="37" height="36" viewBox="0 0 37 36"><rect x="3" y="3" width="30" height="30" rx="5" fill="#e9541f" transform="rotate(-9 18 18)"/><path d="M28 10c-8-3-18-2-17 3 0 5 15 1 15 7 0 5-10 6-18 3" fill="none" stroke="#fff" stroke-width="5"/></svg>
            <button aria-label="Chinese" class="w-[28px] grid place-items-center"><svg width="18" height="18" viewBox="0 0 18 18" fill="none" stroke="#1a6fb8" stroke-width="2.500"><path d="M2 5h14v7H2zM9 1v17"/></svg></button>
            <button aria-label="Punctuation" class="w-[24px] grid place-items-center"><svg width="16" height="16" viewBox="0 0 16 16"><circle cx="4" cy="4" r="2" fill="none" stroke="#1a6fb8" stroke-width="1.500"/><path d="M11 8q4 0 4 3 0 4-4 5 2-2 1-4-3-1-1-4z" fill="#1a6fb8"/></svg></button>
            <button aria-label="Emoji" class="w-[25px] grid place-items-center"><svg width="20" height="20" viewBox="0 0 20 20" fill="none" stroke="#1a6fb8" stroke-width="2"><circle cx="10" cy="10" r="8.500"/><path d="M7 6v3M13 6v3M5 11c1 5 9 5 10 0"/></svg></button>
            <button aria-label="Voice" class="w-[26px] grid place-items-center"><svg width="16" height="20" viewBox="0 0 16 20"><rect x="4.500" width="7" height="12" rx="3.500" fill="#1a6fb8"/><path d="M1.500 8c0 9 13 9 13 0M8 14v4M4 19h8" fill="none" stroke="#1a6fb8" stroke-width="1.800"/></svg></button>
            <button aria-label="Soft keyboard" class="w-[26px] grid place-items-center"><svg width="21" height="16" viewBox="0 0 21 16"><rect width="21" height="16" rx="2" fill="#1a6fb8"/><path d="M3 4h15M3 8h15" stroke="#fff" stroke-width="2" stroke-dasharray="2 1.500"/><path d="M5 12.500h11" stroke="#fff" stroke-width="2"/></svg></button>
            <button aria-label="Account" class="w-[26px] grid place-items-center"><svg width="20" height="19" viewBox="0 0 20 19"><circle cx="7" cy="4" r="4" fill="#b9c0c6"/><path d="M0 18c0-11 14-11 14 0z" fill="#b9c0c6"/><path d="M9 10h10v8H9z" fill="#fff" stroke="#b9c0c6"/><path d="M11 13h6M11 15h6" stroke="#b9c0c6"/></svg></button>
            <button aria-label="Skin" class="w-[24px] grid place-items-center"><svg width="18" height="18" viewBox="0 0 18 18"><path d="M5 0q4 4 8 0l5 4-2 5-2-1v10H4V8L2 9 0 4z" fill="#1a6fb8"/></svg></button>
            <button aria-label="Toolbox" class="w-[24px] grid place-items-center"><svg width="17" height="17" viewBox="0 0 17 17"><path d="M0 0h8v8H0zM0 9h8v8H0zM9 9h8v8H9z" fill="#1a6fb8"/><path d="M10 1h6v6h-6z" fill="none" stroke="#1a6fb8" stroke-width="1.500"/></svg></button>
        </div>
    </footer>

    <!-- taskbar -->
    <div class="flex justify-between h-[50px] shrink-0 bg-[#001a2b] text-white">
        <div class="flex">
            <button aria-label="Start" class="w-[60px] grid place-items-center"><svg width="20" height="20" viewBox="0 0 20 20" fill="#fff"><path d="M0 3l8-1v7H0zM9 2l11-2v9H9zM0 10h8v8l-8-1zM9 10h11v10L9 18z"/></svg></button>
            <button aria-label="Search" class="w-[60px] grid place-items-center"><svg width="22" height="22" viewBox="0 0 22 22" fill="none" stroke="#fff" stroke-width="1.500"><circle cx="13" cy="8" r="6.500"/><path d="M8.500 13L1 21"/></svg></button>
            <button aria-label="Task view" class="w-[60px] grid place-items-center"><svg width="21" height="20" viewBox="0 0 21 20" fill="none" stroke="#fff" stroke-width="1.400"><path d="M1 0v3h12V0M1 6h12v8H1zM1 20v-3h12v3M19 0v5M19 11v9"/><path d="M17.500 7h3v3h-3z" fill="#fff"/></svg></button>
            <button aria-label="File Explorer" class="relative w-[66px] grid place-items-center"><svg width="29" height="26" viewBox="0 0 29 26"><path d="M1 1h11l3 3h13v20H1z" fill="#ecc65b"/><path d="M1 6h27v17H1z" fill="#fbe08b"/><path d="M6 26V15q0-2 2-2h13q2 0 2 2v11h-4v-6h-9v6z" fill="#3aa0d5"/></svg><i class="absolute bottom-0 left-[9px] w-[51px] h-[3px] bg-[#76b0de]"></i></button>
            <button aria-label="Internet Explorer" class="w-[60px] grid place-items-center"><svg width="28" height="28" viewBox="0 0 28 28" fill="none"><path d="M8 15h16c0-14-18-13-18 1 0 10 14 12 18 4" stroke="#4cc4ee" stroke-width="5"/><path d="M3 27c-6-6 12-28 23-25 3 1 1 5-1 7" stroke="#f2cc35" stroke-width="2.500"/></svg></button>
            <button aria-label="Outlook" class="w-[62px] grid place-items-center"><svg width="29" height="28" viewBox="0 0 29 28"><path d="M9 1h19v26H6z" fill="#1a74cf"/><path d="M18 1h10v9H18z" fill="#4bb5ef"/><path d="M9 17l19-3v13H9z" fill="#1561b8"/><rect y="8" width="15" height="15" rx="1" fill="#0f5dab"/><ellipse cx="7.500" cy="15.500" rx="3" ry="4" fill="none" stroke="#fff" stroke-width="2"/></svg></button>
            <button aria-label="Chrome" class="w-[63px] grid place-items-center"><svg width="28" height="28" viewBox="0 0 28 28"><circle cx="14" cy="14" r="13" fill="#e0b73a"/><path d="M3 7c5-8 18-8 22 0H14L9 17z" fill="#dc4437"/><path d="M3 7C-2 16 4 26 13 27l6-10H9z" fill="#2f9b52"/><circle cx="14" cy="14" r="6.500" fill="#fff"/><circle cx="14" cy="14" r="5" fill="#437fdc"/><path d="M17 26q-1-9 5-11 6 3 5 11-5 3-10 0z" fill="#c0ab94"/><path d="M21 20l-3 7h6z" fill="#545e68"/></svg></button>
            <button aria-label="Skype" class="w-[62px] grid place-items-center"><svg width="28" height="28" viewBox="0 0 28 28"><path d="M1 7Q3-1 11 2q16-1 15 12 4 9-3 12-4 2-8-1Q1 26 2 13 0 10 1 7z" fill="#c5f2ff"/><path d="M19 9c-2-4-11-3-10 1s11 3 10 8c-1 4-10 4-11 0" fill="none" stroke="#129bd2" stroke-width="3.500"/></svg></button>
            <button aria-label="OneNote" class="w-[62px] grid place-items-center"><svg width="28" height="28" viewBox="0 0 28 28"><path d="M15 3h11v22H15z" fill="#fff" stroke="#80397b" stroke-width="1.500"/><path d="M17 7h9M17 11h9M17 15h9M17 19h9" stroke="#80397b" stroke-width="2"/><path d="M1 4l16-4v28L1 24z" fill="#80397b"/><path d="M6 19V9l6 10V9" fill="none" stroke="#fff" stroke-width="2.300"/></svg></button>
            <button aria-label="WeChat" class="w-[62px] grid place-items-center"><svg width="30" height="26" viewBox="0 0 30 26"><path d="M10 1C-3 1-3 13 4 17l-1 4 5-3c14 1 16-17 2-17z" fill="#86cd3f"/><path d="M21 9c-12 0-11 14-1 14l5 2-1-3c9-3 6-13-3-13z" fill="#eef2f2"/><path d="M6 6h2v2H6zM13 6h2v2h-2z" fill="#245d1d"/><path d="M17 14h2v2h-2zM23 14h2v2h-2z" fill="#777"/></svg></button>
            <button aria-label="Browser" class="w-[62px] grid place-items-center"><svg width="30" height="29" viewBox="0 0 30 29"><circle cx="14" cy="16" r="12.500" fill="#a9d2f2"/><path d="M4 9q9-9 20 1-7 6-20-1z" fill="#dff1ff"/><path d="M2 18q12 5 24 0" fill="none" stroke="#245c91" stroke-width="2"/><path d="M15 14l7-14" stroke="#b5856b" stroke-width="1.500"/></svg></button>
            <button aria-label="VMware" class="relative w-[62px] grid place-items-center"><svg width="30" height="30" viewBox="0 0 30 30"><path d="M0 0h13l-3 4 5 5-4 4-5-5-6 3zM30 0v13l-4-3-4 4-5-5 5-5-4-4zM30 17v13H17l4-4-6-6 4-5 6 6z" fill="#eab918"/><path d="M11 13l4-4 4 4-1 5" fill="none" stroke="#3b8149" stroke-width="2"/></svg><i class="absolute bottom-0 left-[5px] w-[51px] h-[3px] bg-[#76b0de]"></i></button>
            <button aria-label="PDF Reader" class="relative w-[61px] grid place-items-center bg-[#2a4a59]"><svg width="30" height="31" viewBox="0 0 30 31"><path d="M0 1h22l8 7v23H0z" fill="#f58a1f"/><path d="M23 0v7h7z" fill="#7d654c"/><path d="M23 6C13 3 6 8 6 15c0 8 11 9 14 2l3-7h-8l-1 3h4c-1 4-6 5-7 1 0-4 4-7 11-5z" fill="#fff"/><path d="M9 26h13" stroke="#fff" stroke-width="4" stroke-dasharray="3 1"/></svg><i class="absolute bottom-0 left-0 w-full h-[3px] bg-[#76b0de]"></i></button>
            <button aria-label="PowerPoint" class="relative w-[62px] grid place-items-center"><svg width="30" height="28" viewBox="0 0 30 28"><circle cx="16" cy="14" r="13.500" fill="#d2472a"/><path d="M16 .5A13.500 13.500 0 0129.500 14H16z" fill="#ff8f6b"/><rect y="7" width="15" height="15" rx="1" fill="#b7331b"/><path d="M5.500 19v-9h3q3 0 3 3t-3 3h-3" fill="none" stroke="#fff" stroke-width="2"/></svg><i class="absolute bottom-0 left-[6px] w-[51px] h-[3px] bg-[#76b0de]"></i></button>
            <button aria-label="Recorder" class="relative w-[62px] grid place-items-center"><svg width="27" height="24" viewBox="0 0 27 24"><path d="M0 2h15V0h5v2h7v22H0z" fill="#fff"/><circle cx="10" cy="14" r="5" fill="#dc592d"/><path d="M19 7h5v13h-5z" fill="#dc592d"/><circle cx="14" cy="7" r="1.500" fill="#999"/></svg><i class="absolute bottom-0 left-[6px] w-[51px] h-[3px] bg-[#76b0de]"></i></button>
        </div>
        <div class="flex">
            <button aria-label="People" class="w-[50px] grid place-items-center"><svg width="20" height="20" viewBox="0 0 20 20" fill="none" stroke="#fff" stroke-width="1.500"><circle cx="13" cy="4" r="3"/><circle cx="6" cy="10" r="3"/><path d="M1 19c0-7 10-7 10 0M10 11c2-5 9-3 9 2"/></svg></button>
            <button aria-label="Show hidden icons" class="w-[48px] grid place-items-center"><svg width="17" height="10" viewBox="0 0 17 10"><path d="M1 9l7.500-7.500L16 9" fill="none" stroke="#fff" stroke-width="1.500"/></svg></button>
            <button aria-label="OneDrive" class="w-[36px] grid place-items-center"><svg width="21" height="14" viewBox="0 0 21 14"><path d="M4 13c-5-1-4-7 0-7C6-1 14-1 16 5c6 1 5 8 1 8z" fill="#1e86d9"/><path d="M4 13l9-7c8-1 10 6 4 7z" fill="#35a7ee"/></svg></button>
            <button aria-label="Battery" class="w-[42px] grid place-items-center"><svg width="20" height="12" viewBox="0 0 20 12"><path d="M1 1h16v10H1zM18 4h2v4h-2" fill="none" stroke="#fff" stroke-width="1.400"/><path d="M3 3h9v6H3z" fill="#fff"/></svg></button>
            <button aria-label="Volume" class="w-10 grid place-items-center"><svg width="22" height="18" viewBox="0 0 22 18" fill="none" stroke="#fff" stroke-width="1.300"><path d="M1 6h3l4-4v14l-4-4H1zM11 6q2 3 0 6M14 4q4 5 0 10M17 2q6 7 0 14"/></svg></button>
            <button aria-label="Wi-Fi" class="w-10 grid place-items-center"><svg width="17" height="17" viewBox="0 0 17 17" fill="none" stroke="#ddd" stroke-width="1.400"><path d="M1 16C1 7 7 1 16 1M5 16C5 10 9 5 16 5M9 16c0-4 3-7 7-7"/><circle cx="14" cy="14.500" r="1.500" fill="#fff"/></svg></button>
            <button aria-label="Keyboard" class="w-[48px] grid place-items-center"><svg width="30" height="18" viewBox="0 0 30 18" fill="none" stroke="#fff"><path d="M1 1h28v16H1z" stroke-width="1.400"/><path d="M4 5h22M4 9h22" stroke-width="1.500" stroke-dasharray="1.500 2"/><path d="M4 13h3M9 13h12M23 13h3"/></svg></button>
            <button class="w-8 text-[16px]">中</button>
            <button aria-label="Sogou" class="w-[38px] grid place-items-center"><svg width="20" height="20" viewBox="0 0 37 36"><rect x="3" y="3" width="30" height="30" rx="5" fill="#e9541f" transform="rotate(-9 18 18)"/><path d="M28 10c-8-3-18-2-17 3 0 5 15 1 15 7 0 5-10 6-18 3" fill="none" stroke="#fff" stroke-width="5"/></svg></button>
            <button class="w-[92px] leading-6 text-center">5:56 PM<br>7/23/2020</button>
            <button class="relative w-[44px]"><svg class="absolute left-[11px] top-[15px]" width="20" height="19" viewBox="0 0 20 19"><path d="M0 0h20v15h-6l-4 4v-4H0z" fill="#fff"/><path d="M4 4h12M4 7h12M4 10h8" stroke="#001a2b"/></svg><span class="absolute left-[19px] top-[23px] size-[23px] rounded-full border border-[#999] bg-[#2a3a45] text-[13px] leading-5 font-bold">23</span></button>
            <div class="w-[18px] pl-3"><div class="h-full border-l border-[#4a5c68]"></div></div>
        </div>
    </div>

    <!-- tooltip and pointer -->
    <div class="absolute left-[205px] top-[856px] h-[25px] px-[6px] leading-[23px] bg-white border border-[#767676] shadow-[3px_3px_1px_#9a9a9a] text-[#666]">16.55 : CMP (immediate)</div>
    <svg class="absolute left-[207px] top-[837px]" width="18" height="24" viewBox="0 0 18 24"><path d="M5 14V3c0-3 3-3 3 0v6l1-1q2 0 2 2 2-2 3 1 3-1 3 2v4l-2 3v3H7v-3l-6-7c0-2 2-2 4 1z" fill="#fff" stroke="#000" stroke-width="1.200"/><path d="M8 9v5M11 10v4M14 11v3" stroke="#000"/></svg>

    <script>
        const bookmarks = [
            'BFM', 'BFXIL', 'BIC (shifted register)', 'BICS (shifted register)', 'BL', 'BLR',
            'BLRAA, BLRAAZ, BLRAB, BLRABZ', 'BR', 'BRAA, BRAAZ, BRAB, BRABZ', 'BRK', 'CBNZ', 'CBZ',
            'CCMN (immediate)', 'CCMN (register)', 'CCMP (immediate)', 'CCMP (register)', 'CINC', 'CINV',
            'CLREX', 'CLS', 'CLZ', 'CMN (extended register)', 'CMN (immediate)', 'CMN (shifted register)',
            'CMP (extended register)', 'CMP (immediate)', 'CMP (shifted register)', 'CNEG',
            'CRC32B, CRC32H, CRC32W, CRC32X', 'CRC32CB, CRC32CH, CRC32CW, CRC32CX', 'CSEL', 'CSET', 'CSETM'
        ];
        const selected = 'CMP (immediate)';

        document.getElementById('bookmarks').innerHTML = bookmarks.map((name, i) => {
            const active = name === selected;
            return `
                <li class="flex items-center h-[22px] ml-[22px] border-l border-dotted border-[#777] whitespace-nowrap">
                    <span class="w-3 border-t border-dotted border-[#777]"></span>
                    <svg width="15" height="21" viewBox="0 0 15 21"><path d="M0 0h15v20l-5-4-6 4V4z" fill="${active ? '#2f918c' : '#945f9b'}"/><path d="M0 0h8L4 4z" fill="#777"/></svg>
                    <a href="#" class="${active ? 'ml-2 px-[2px] bg-[#e6e6e6] underline' : 'ml-2 px-[2px]'}">16.${30 + i} : ${name}</a>
                </li>`;
        }).join('');

        const operands = [
            ['Wd', '32-bit name of the general-purpose destination'],
            ['Wn', '32-bit name of the first general-purpose source'],
            ['Wm', '32-bit name of the second general-purpose source'],
            ['Xd', '64-bit name of the general-purpose destination'],
            ['Xn', '64-bit name of the first general-purpose source'],
            ['Xm', '64-bit name of the second general-purpose source']
        ];

        document.getElementById('operands').innerHTML = operands.map(([name, text]) => `
            <dt class="font-['DejaVu_Sans_Mono',monospace] font-bold italic text-[12px] leading-4">${name}</dt>
            <dd class="pl-[58px]">Is the ${text} register.</dd>
        `).join('');
    </script>
</body>
</html>
